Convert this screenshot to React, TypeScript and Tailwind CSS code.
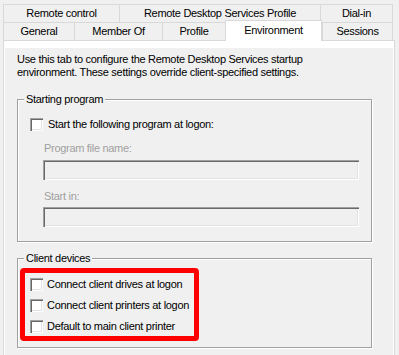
import React from "react";

const font = { fontFamily: '"Liberation Sans", Arial, sans-serif' };

function Tab({ label, w, selected }: { label: string; w: string; selected?: boolean }) {
  if (selected) {
    return (
      <div
        className={`${w} relative z-10 -mt-[2px] -mb-[1px] h-[21px] flex items-start justify-center pt-[3px] bg-white border-x border-t border-[#d9d9d9]`}
      >
        {label}
      </div>
    );
  }
  return (
    <div className={`${w} h-[18px] flex items-center justify-center bg-[#f0f0f0] border-l border-t border-[#d9d9d9] last:border-r`}>
      {label}
    </div>
  );
}

function CheckBox() {
  return (
    <div className="w-[13px] h-[13px] shrink-0 bg-white shadow-[inset_1px_1px_0_#a0a0a0,inset_2px_2px_0_#696969,inset_-1px_-1px_0_#ffffff,inset_-2px_-2px_0_#e3e3e3]" />
  );
}

function Input() {
  return (
    <div className="ml-[25px] w-[316px] h-[20px] bg-[#f0f0f0] shadow-[inset_1px_1px_0_#a0a0a0,inset_2px_2px_0_#696969,inset_-1px_-1px_0_#ffffff,inset_-2px_-2px_0_#e3e3e3]" />
  );
}

function Group({ label, h, className, children }: { label: string; h: string; className?: string; children: React.ReactNode }) {
  return (
    <div
      className={`relative w-[355px] ${h} border border-[#a0a0a0] shadow-[1px_1px_0_#ffffff,inset_1px_1px_0_#ffffff] ${className ?? ""}`}
    >
      <div className="absolute left-[6px] -top-[7px] px-[2px] bg-[#f0f0f0] leading-[13px] whitespace-nowrap">{label}</div>
      {children}
    </div>
  );
}

export default function App() {
  return (
    <div
      className="w-[399px] h-[355px] overflow-hidden bg-[#f0f0f0] text-[11px] leading-[13px] tracking-[-0.3px] text-black pt-[4px] pl-[3px]"
      style={font}
    >
      <div className="flex">
        <Tab label="Remote control" w="w-[116px]" />
        <Tab label="Remote Desktop Services Profile" w="w-[201px]" />
        <Tab label="Dial-in" w="w-[73px]" />
      </div>
      <div className="flex items-start h-[18px]">
        <Tab label="General" w="w-[71px]" />
        <Tab label="Member Of" w="w-[88px]" />
        <Tab label="Profile" w="w-[63px]" />
        <Tab label="Environment" w="w-[97px]" selected />
        <div className="w-[71px] h-[18px] flex items-center justify-center bg-[#f0f0f0] border-x border-t border-[#d9d9d9]">
          Sessions
        </div>
      </div>
      <div className="w-[392px] h-[330px] bg-white border border-[#d9d9d9] pl-[1px] pt-[7px] pr-[1px]">
        <div className="h-full bg-[#f0f0f0] pl-[12px] pt-[5px]">
          <p className="whitespace-nowrap">Use this tab to configure the Remote Desktop Services startup</p>
          <p className="whitespace-nowrap">environment. These settings override client-specified settings.</p>

          <Group label="Starting program" h="h-[143px]" className="mt-[20px]">
            <div className="flex items-center gap-[5px] ml-[12px] mt-[18px]">
              <CheckBox />
              <span className="whitespace-nowrap">Start the following program at logon:</span>
            </div>
            <div className="ml-[26px] mt-[11px] text-[#a0a0a0]">Program file name:</div>
            <div className="mt-[5px]">
              <Input />
            </div>
            <div className="ml-[26px] mt-[10px] text-[#a0a0a0]">Start in:</div>
            <div className="mt-[4px]">
              <Input />
            </div>
          </Group>

          <Group label="Client devices" h="h-[90px]" className="mt-[16px]">
            <div className="ml-[2px] mt-[9px] w-[179px] h-[73px] border-[5px] border-[#ff0000] rounded-[4px] pt-[1px]">
              {[
                "Connect client drives at logon",
                "Connect client printers at logon",
                "Default to main client printer",
              ].map((t) => (
                <div key={t} className="flex items-center gap-[4px] h-[21px] pl-[5px]">
                  <CheckBox />
                  <span className="whitespace-nowrap">{t}</span>
                </div>
              ))}
            </div>
          </Group>
        </div>
      </div>
    </div>
  );
}
